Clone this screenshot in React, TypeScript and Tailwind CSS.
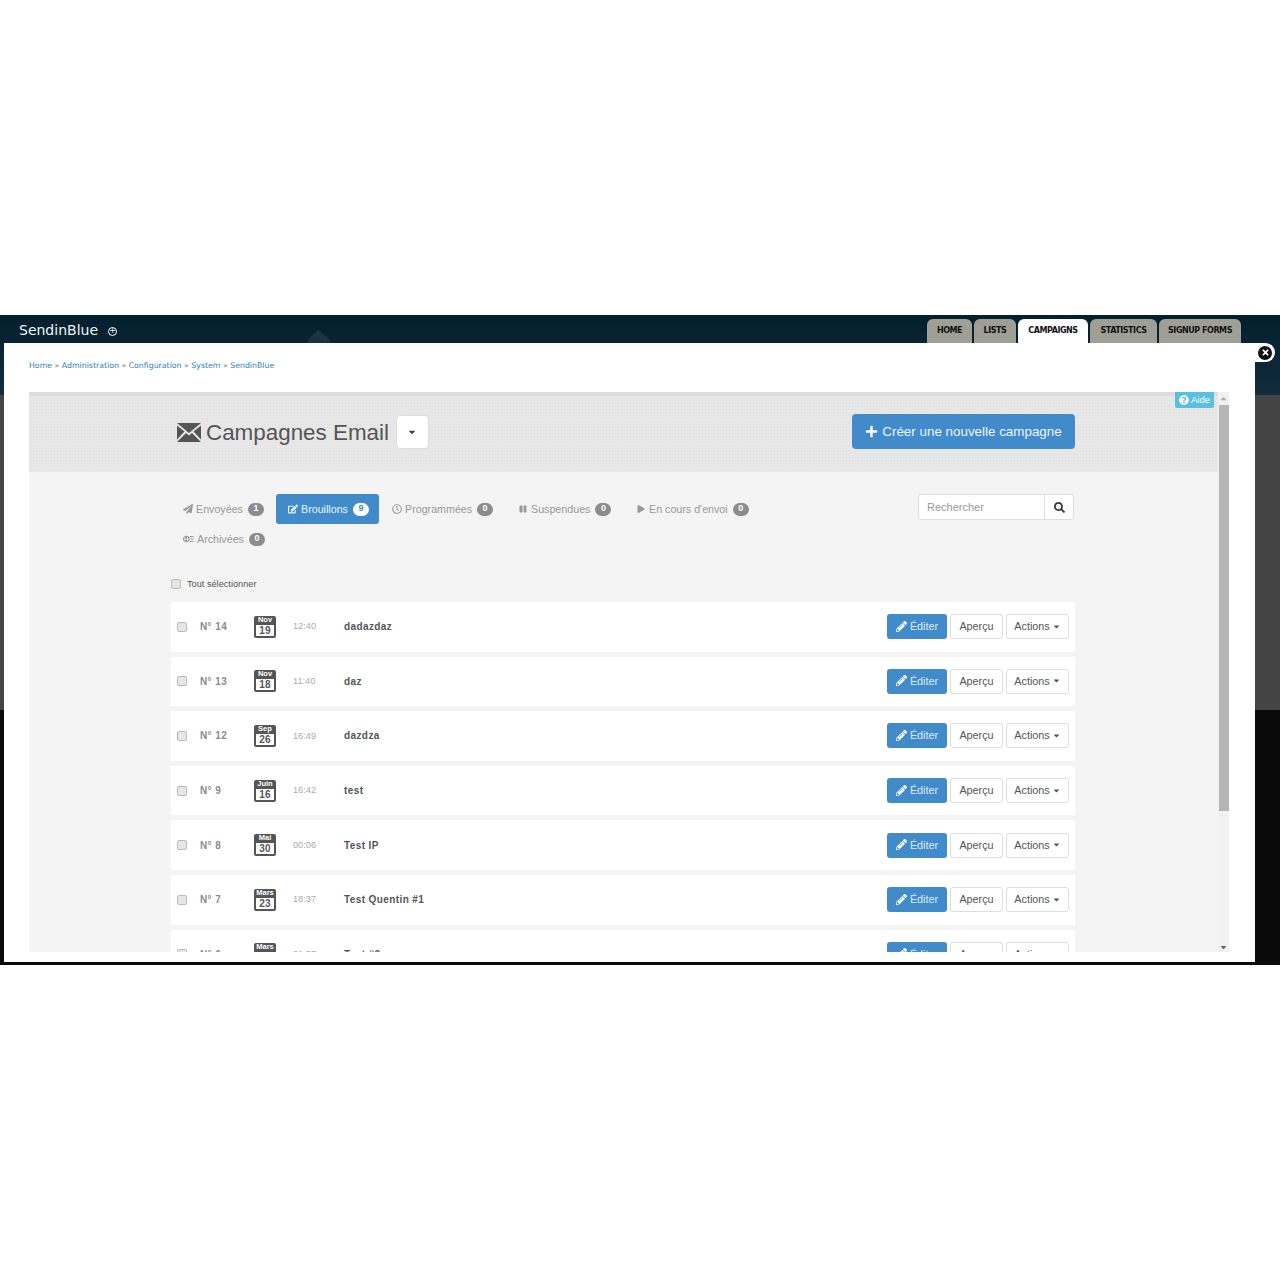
import { FaPaperPlane, FaEdit, FaRegClock, FaPause, FaPlay, FaPlus, FaPencilAlt, FaSearch, FaQuestionCircle, FaTimes, FaCaretDown, FaCaretUp, FaSortDown } from "react-icons/fa";
import type { ReactNode } from "react";

const tabs = [
  { label: "HOME", w: "w-[45px]" },
  { label: "LISTS", w: "w-[42px]" },
  { label: "CAMPAIGNS", w: "w-[70px]", active: true },
  { label: "STATISTICS", w: "w-[67px]" },
  { label: "SIGNUP FORMS", w: "w-[82px]" },
];

const campaigns = [
  { no: "N° 14", month: "Nov", day: "19", time: "12:40", name: "dadazdaz" },
  { no: "N° 13", month: "Nov", day: "18", time: "11:40", name: "daz" },
  { no: "N° 12", month: "Sep", day: "26", time: "16:49", name: "dazdza" },
  { no: "N° 9", month: "Juin", day: "16", time: "16:42", name: "test" },
  { no: "N° 8", month: "Mai", day: "30", time: "00:06", name: "Test IP" },
  { no: "N° 7", month: "Mars", day: "23", time: "18:37", name: "Test Quentin #1" },
  { no: "N° 6", month: "Mars", day: "23", time: "01:57", name: "Test #2" },
];

const ArchiveIcon = () => (
  <svg viewBox="0 0 12 10" className="h-[10px] w-[11px]" fill="none" stroke="currentColor" strokeWidth="1.2">
    <circle cx="3.6" cy="5" r="3" />
    <path d="M2.4 3.5h2M2.4 5h2M2.4 6.5h2M7.5 2.2h4M8 5h3.5M7.5 7.8h4" />
  </svg>
);

const Pill = ({ icon, label, count, active, className }: { icon: ReactNode; label: string; count: string; active?: boolean; className?: string }) => (
  <div
    className={`flex h-[30px] items-center rounded-[3px] text-[10.7px] ${active ? "bg-[#428bca] text-[#eaf2f9]" : "text-[#999]"} ${className ?? ""}`}
  >
    <span className="mr-[3px] flex w-[11px] items-center justify-center text-[10px]">{icon}</span>
    <span>{label}</span>
    <span
      className={`ml-[5px] flex h-[13px] w-[16px] items-center justify-center rounded-full text-[9px] font-bold ${active ? "bg-white text-[#428bca]" : "bg-[#8c8c8c] text-white"}`}
    >
      {count}
    </span>
  </div>
);

const Check = ({ className }: { className?: string }) => (
  <span className={`block h-[10px] w-[10px] rounded-[2px] border border-[#bbb] bg-[#e6e6e6] ${className ?? ""}`} />
);

const Row = ({ c }: { c: (typeof campaigns)[number] }) => (
  <div className="mb-[5px] flex h-[49.6px] shrink-0 items-center bg-white pl-[6px] pr-[6px]">
    <Check />
    <span className="ml-[13px] w-[54px] text-[10px] font-bold tracking-[0.4px] text-[#8a8a8a]">{c.no}</span>
    <div className="flex h-[22px] w-[22px] flex-col rounded-[2px] bg-[#555] p-[2px] pt-0">
      <span className="h-[8px] text-center text-[7.5px] font-bold leading-[8px] text-white">{c.month}</span>
      <span className="mt-[1px] flex-1 bg-white text-center text-[10px] font-bold leading-[11px] tracking-[0.2px] text-[#555]">{c.day}</span>
    </div>
    <span className="ml-[17px] w-[51px] pt-[1px] text-[9.2px] text-[#aaa]">{c.time}</span>
    <span className="flex-1 text-[10px] font-bold tracking-[0.4px] text-[#555]">{c.name}</span>
    <button className="flex h-[25px] w-[60px] items-center justify-center gap-[3px] rounded-[3px] bg-[#428bca] pb-[1px] text-[10.8px] text-[#dfeaf5]">
      <FaPencilAlt className="text-[11px] text-white" />
      Éditer
    </button>
    <button className="ml-[3px] h-[25px] w-[53px] rounded-[3px] border border-[#ddd] bg-white pb-[1px] text-[10.8px] text-[#555]">Aperçu</button>
    <button className="ml-[3px] flex h-[25px] w-[63px] items-center justify-center gap-[2px] rounded-[3px] border border-[#ddd] bg-white pb-[1px] text-[10.8px] text-[#555]">
      Actions
      <FaCaretDown className="text-[9px]" />
    </button>
  </div>
);

export default function App() {
  return (
    <div className="min-h-[1280px] bg-white pt-[315px] font-['Liberation_Sans',Arial,sans-serif]">
      <div className="relative h-[650px] overflow-hidden bg-[linear-gradient(to_bottom,#03202f_0,#132b3c_80px,#444444_80px,#444444_395px,#0a0a0a_395px)]">
        {/* Top bar */}
        <div className="relative flex h-[28px] items-start justify-between pl-[19px] pr-[39px]">
          <div className="flex items-center pt-[5px] font-['DejaVu_Sans',sans-serif] text-[14px] leading-[20px] text-[#f2f5f7]">
            SendinBlue
            <span className="ml-[10px] mt-[2px] flex h-[9px] w-[9px] items-center justify-center rounded-full border border-white text-[8px] leading-none">
              +
            </span>
          </div>
          <svg viewBox="0 0 30 16" className="absolute left-[304px] top-[14px] h-[14px] w-[30px]" fill="#1b3344">
            <path d="M14 0C13 4 2 9 2 16h26C28 9 16 5 14 0Z" />
          </svg>
          <div className="flex gap-[2px] pt-[4px]">
            {tabs.map((t) => (
              <div
                key={t.label}
                className={`flex h-[24px] items-center justify-center rounded-t-[6px] font-['DejaVu_Sans',sans-serif] text-[8px] font-bold tracking-[-0.45px] text-[#111] ${t.w} ${t.active ? "bg-white" : "bg-[#a09f96]"}`}
              >
                {t.label}
              </div>
            ))}
          </div>
        </div>

        {/* Overlay */}
        <div className="relative ml-[4px] h-[619px] w-[1251px] bg-white pl-[25px]">
          <div className="flex h-[49px] items-start pt-[18px] font-['DejaVu_Sans',sans-serif] text-[7.8px] leading-[10px] text-[#2a7fc0]">
            <span>Home</span>
            <span className="mx-[2.5px] text-[#888]">»</span>
            <span>Administration</span>
            <span className="mx-[2.5px] text-[#888]">»</span>
            <span>Configuration</span>
            <span className="mx-[2.5px] text-[#888]">»</span>
            <span>System</span>
            <span className="mx-[2.5px] text-[#888]">»</span>
            <span>SendinBlue</span>
          </div>

          {/* Close button */}
          <div className="absolute left-[1251px] top-0 flex h-[19px] w-[20px] items-center justify-center rounded-r-full bg-white">
            <span className="flex h-[14px] w-[14px] items-center justify-center rounded-full bg-[#111] text-[9px] text-white">
              <FaTimes />
            </span>
          </div>

          {/* Framed app */}
          <div className="relative flex h-[560px] w-[1200px] overflow-hidden bg-[#f4f4f4]">
            <div className="flex w-[1189px] flex-col">
              <div className="flex h-[80px] shrink-0 items-center border-t-[4px] border-[#dcdcdc] bg-[#e7e7e7] bg-[radial-gradient(#e1e1e1_1px,transparent_1px)] bg-[length:3px_3px] pb-[5px] pl-[148px] pr-[143px]">
                <svg viewBox="0 0 24 20" className="h-[20px] w-[24px]" fill="#555">
                  <path d="M0 1h24L12 11Z" />
                  <path d="M0 3.5v14l7.5-8ZM24 3.5v14l-7.5-8Z" />
                  <path d="M0 20 9 11l3 2.5 3-2.5 9 9Z" />
                </svg>
                <span className="ml-[5px] mt-[3px] text-[22.4px] leading-[32px] text-[#555]">Campagnes Email</span>
                <button className="ml-[7px] flex h-[34px] w-[33px] items-center justify-center rounded-[4px] border border-[#ddd] bg-white text-[10px] text-[#444]">
                  <FaCaretDown />
                </button>
                <button className="ml-auto flex h-[35px] w-[223px] items-center justify-center gap-[4px] rounded-[4px] bg-[#428bca] text-[13.4px] text-[#eef4fa]">
                  <FaPlus className="text-[13px] text-white" />
                  <span className="pt-[2px]">Créer une nouvelle campagne</span>
                </button>
              </div>

              <div className="ml-[142px] flex w-[904px] flex-col pt-[22px]">
                <div className="flex items-start justify-between">
                  <div className="flex w-[640px] flex-wrap">
                    <Pill className="w-[105px] pl-[11px]" icon={<FaPaperPlane />} label="Envoyées" count="1" />
                    <Pill className="w-[103px] pl-[11px]" active icon={<FaEdit />} label="Brouillons" count="9" />
                    <Pill className="ml-[12px] w-[126px]" icon={<FaRegClock />} label="Programmées" count="0" />
                    <Pill className="w-[118px]" icon={<FaPause className="text-[8px]" />} label="Suspendues" count="0" />
                    <Pill className="w-[125px]" icon={<FaPlay className="text-[8px]" />} label="En cours d'envoi" count="0" />
                    <Pill className="w-[105px] pl-[12px]" icon={<ArchiveIcon />} label="Archivées" count="0" />
                  </div>
                  <div className="mr-[1px] flex h-[26px] w-[156px] rounded-[3px] border border-[#ddd] bg-white">
                    <input
                      placeholder="Rechercher"
                      className="w-[126px] border-r border-[#ddd] bg-transparent pl-[8px] text-[11px] outline-none placeholder:text-[#999]"
                    />
                    <span className="flex flex-1 items-center justify-center text-[11px] text-[#333]">
                      <FaSearch />
                    </span>
                  </div>
                </div>
                <div className="mb-[12px] mt-[24px] flex h-[12px] items-center text-[9.2px] text-[#555]">
                  <Check />
                  <span className="ml-[6px] pt-[1px]">Tout sélectionner</span>
                </div>
                {campaigns.map((c) => (
                  <Row key={c.no} c={c} />
                ))}
              </div>
            </div>

            {/* Scrollbar */}
            <div className="flex w-[11px] flex-col items-center bg-[#f1f1f1] text-[9px] text-[#666]">
              <FaCaretUp className="mt-[2px] h-[9px] text-[#aaa]" />
              <div className="mt-[2px] h-[406px] w-[10px] bg-[#b5b5b5]" />
              <FaSortDown className="mt-auto mb-[2px] h-[9px]" />
            </div>

            {/* Help tab */}
            <div className="absolute left-[1146px] top-0 flex h-[16px] w-[39px] items-center justify-center gap-[2px] rounded-b-[2px] bg-[#5bc0de] text-[9.5px] text-white">
              <FaQuestionCircle className="text-[10px]" />
              Aide
            </div>
          </div>
        </div>
      </div>
    </div>
  );
}
